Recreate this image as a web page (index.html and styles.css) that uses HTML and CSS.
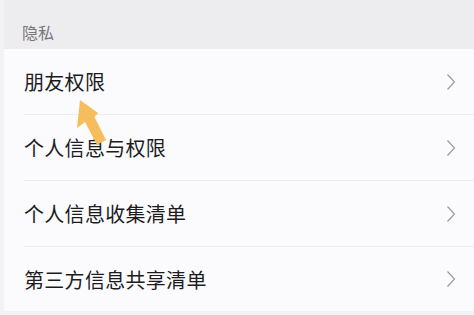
FILE: index.html
```html
<!DOCTYPE html>
<html lang="zh-CN">
<head>
    <meta charset="UTF-8">
    <meta name="viewport" content="width=device-width, initial-scale=1.0">
    <title>隐私</title>
    <link rel="stylesheet" href="styles.css">
</head>
<body>
    <div class="page">
        <div class="section-title">隐私</div>
        <ul class="menu">
            <li class="menu-item">
                <span class="label">朋友权限</span>
                <svg class="chevron" viewBox="0 0 10 18" width="10" height="18"><path d="M1.5 1.5 L8.5 9 L1.5 16.5" fill="none" stroke="#9a9aa0" stroke-width="1.2"/></svg>
            </li>
            <li class="menu-item">
                <span class="label">个人信息与权限</span>
                <svg class="chevron" viewBox="0 0 10 18" width="10" height="18"><path d="M1.5 1.5 L8.5 9 L1.5 16.5" fill="none" stroke="#9a9aa0" stroke-width="1.2"/></svg>
            </li>
            <li class="menu-item">
                <span class="label">个人信息收集清单</span>
                <svg class="chevron" viewBox="0 0 10 18" width="10" height="18"><path d="M1.5 1.5 L8.5 9 L1.5 16.5" fill="none" stroke="#9a9aa0" stroke-width="1.2"/></svg>
            </li>
            <li class="menu-item">
                <span class="label">第三方信息共享清单</span>
                <svg class="chevron" viewBox="0 0 10 18" width="10" height="18"><path d="M1.5 1.5 L8.5 9 L1.5 16.5" fill="none" stroke="#9a9aa0" stroke-width="1.2"/></svg>
            </li>
        </ul>

        <!-- 标注箭头 -->
        <svg class="pointer" viewBox="0 0 474 315" width="474" height="315">
            <polygon points="80,100 98,113 94.5,117 106,140 97,145 85,122 77,128" fill="#f6bd5c"/>
        </svg>
    </div>
</body>
</html>
```

FILE: styles.css
```css
body {
    margin: 0;
    padding: 0;
    background-color: #f3f3f5;
    font-family: 'Noto Sans CJK SC', 'Noto Sans', sans-serif;
}

.page {
    position: relative;
    width: 474px;
    height: 315px;
    overflow: hidden;
    padding-left: 4px;
    box-sizing: border-box;
}

.section-title {
    height: 49px;
    padding-left: 18px;
    box-sizing: border-box;
    display: flex;
    align-items: center;
    padding-top: 14px;
    background-color: #ededf0;
    color: #77777d;
    font-size: 16px;
}

.menu {
    list-style: none;
    margin: 0;
    padding: 0;
    background-color: #fbfbfd;
}

.menu-item {
    height: 66px;
    margin-left: 20px;
    padding-right: 18px;
    display: flex;
    align-items: center;
    justify-content: space-between;
    border-bottom: 1px solid #eeeef2;
    box-sizing: border-box;
}

.menu-item:last-child {
    border-bottom: none;
    height: 64px;
}

.label {
    font-size: 20px;
    color: #1c1c1e;
    letter-spacing: 0.3px;
}

.chevron {
    display: block;
}

.pointer {
    position: absolute;
    left: 0;
    top: 0;
}
```
